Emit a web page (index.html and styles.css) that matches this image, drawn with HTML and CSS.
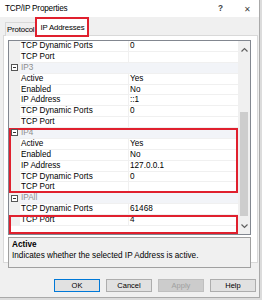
FILE: index.html
```html
<!DOCTYPE html>
<html lang="en">
<head>
    <meta charset="UTF-8">
    <title>TCP/IP Properties</title>
    <link rel="stylesheet" href="styles.css">
</head>
<body>
    <div class="window">
        <div class="titlebar">
            <span class="title">TCP/IP Properties</span>
            <span class="help">?</span>
            <span class="close">✕</span>
        </div>

        <div class="tabs">
            <div class="tab">Protocol</div>
            <div class="tab active marked">IP Addresses</div>
        </div>

        <div class="panel">
            <div class="grid">
                <div class="rows">
                    <div class="row"><span class="gutter"></span><span class="name">TCP Dynamic Ports</span><span class="value">0</span></div>
                    <div class="row"><span class="gutter"></span><span class="name">TCP Port</span><span class="value"></span></div>

                    <div class="row category"><span class="gutter"><i class="toggle"></i></span><span class="name">IP3</span></div>
                    <div class="row"><span class="gutter"></span><span class="name">Active</span><span class="value">Yes</span></div>
                    <div class="row"><span class="gutter"></span><span class="name">Enabled</span><span class="value">No</span></div>
                    <div class="row"><span class="gutter"></span><span class="name">IP Address</span><span class="value">::1</span></div>
                    <div class="row"><span class="gutter"></span><span class="name">TCP Dynamic Ports</span><span class="value">0</span></div>
                    <div class="row"><span class="gutter"></span><span class="name">TCP Port</span><span class="value"></span></div>

                    <div class="marked">
                        <div class="row category"><span class="gutter"><i class="toggle"></i></span><span class="name">IP4</span></div>
                        <div class="row"><span class="gutter"></span><span class="name">Active</span><span class="value">Yes</span></div>
                        <div class="row"><span class="gutter"></span><span class="name">Enabled</span><span class="value">No</span></div>
                        <div class="row"><span class="gutter"></span><span class="name">IP Address</span><span class="value">127.0.0.1</span></div>
                        <div class="row"><span class="gutter"></span><span class="name">TCP Dynamic Ports</span><span class="value">0</span></div>
                        <div class="row"><span class="gutter"></span><span class="name">TCP Port</span><span class="value"></span></div>
                    </div>

                    <div class="row category"><span class="gutter"><i class="toggle"></i></span><span class="name">IPAll</span></div>
                    <div class="row"><span class="gutter"></span><span class="name">TCP Dynamic Ports</span><span class="value">61468</span></div>
                    <div class="marked last">
                        <div class="row"><span class="gutter"></span><span class="name">TCP Port</span><span class="value">4</span></div>
                    </div>
                </div>

                <div class="scrollbar">
                    <div class="arrow">
                        <svg width="7" height="5" viewBox="0 0 7 5"><path d="M0.5 4.5 L3.5 1.5 L6.5 4.5" fill="none" stroke="#606060" stroke-width="1.2"/></svg>
                    </div>
                    <div class="track">
                        <div class="thumb"></div>
                    </div>
                    <div class="arrow">
                        <svg width="7" height="5" viewBox="0 0 7 5"><path d="M0.5 0.5 L3.5 3.5 L6.5 0.5" fill="none" stroke="#606060" stroke-width="1.2"/></svg>
                    </div>
                </div>
            </div>

            <div class="desc">
                <p class="desc-title">Active</p>
                <p>Indicates whether the selected IP Address is active.</p>
            </div>
        </div>

        <div class="buttons">
            <button class="default">OK</button>
            <button>Cancel</button>
            <button disabled>Apply</button>
            <button>Help</button>
        </div>
    </div>
</body>
</html>
```

FILE: styles.css
```css
html {
    background: #dcdcdc;
}
body {
    margin: 0;
    font-family: "Liberation Sans", Arial, sans-serif;
    font-size: 8.2px;
    color: #000;
}
.window {
    width: 260px;
    height: 298px;
    background: #f0f0f0;
    border-right: 1px solid #a9a9a9;
    border-bottom: 1px solid #a9a9a9;
    box-sizing: border-box;
}
.titlebar {
    height: 17px;
    background: #fff;
    display: flex;
    align-items: center;
    padding-left: 5px;
}
.title {
    flex: 1;
    letter-spacing: -0.2px;
}
.help {
    width: 8px;
    margin-right: 18px;
    font-weight: bold;
    color: #444;
}
.close {
    width: 10px;
    margin-right: 5px;
    color: #444;
}

.tabs {
    display: flex;
    padding: 1px 0 0 5px;
    height: 18px;
    box-sizing: border-box;
}
.tab {
    padding: 0 1px;
    line-height: 13px;
    margin-top: 4px;
    height: 13px;
    border: 1px solid #d9d9d9;
    border-bottom: none;
    background: #f0f0f0;
    white-space: nowrap;
    font-size: 7.8px;
    letter-spacing: -0.15px;
}
.tab.active {
    margin-top: 0;
    height: 18px;
    line-height: 17px;
    padding: 0 3px;
    box-sizing: border-box;
    background: #fff;
    position: relative;
    z-index: 1;
}
.marked {
    outline: 2px solid #e0202e;
    outline-offset: -2px;
    position: relative;
    z-index: 2;
}
.tab.marked {
    outline-offset: -1px;
}

.panel {
    margin: 0 1px 0 3px;
    height: 228px;
    border: 1px solid #d9d9d9;
    background: #fff;
    padding: 4px 6px 0 4px;
    box-sizing: border-box;
}
.grid {
    display: flex;
    height: 193px;
    border: 1px solid #828790;
    overflow: hidden;
    background: #fff;
}
.rows {
    flex: 1;
    display: flex;
    flex-direction: column;
}
.row {
    display: flex;
    flex: none;
    height: 10.875px;
    line-height: 10.875px;
    box-sizing: border-box;
    border-bottom: 1px solid #f0f0f0;
    white-space: nowrap;
    overflow: hidden;
}
.marked.last {
    flex: 1;
    padding-bottom: 2px;
}
.gutter {
    width: 11px;
    flex: none;
    background: #f0f0f0;
    display: flex;
    align-items: center;
    justify-content: center;
}
.name {
    width: 109px;
    flex: none;
    box-sizing: border-box;
    padding-left: 1px;
    border-right: 1px solid #f0f0f0;
}
.value {
    padding-left: 1px;
}
.category {
    background: #f0f0f0;
}
.category .name {
    color: #8d8d8d;
    border-right: none;
    background: #f2f4f8;
    flex: 1;
}
.toggle {
    width: 5px;
    height: 5px;
    border: 1px solid #555;
    background: #fff;
    position: relative;
}
.toggle::after {
    content: "";
    position: absolute;
    left: 1px;
    top: 2px;
    width: 3px;
    height: 1px;
    background: #333;
}

.scrollbar {
    width: 12px;
    flex: none;
    background: #f0f0f0;
    display: flex;
    flex-direction: column;
}
.arrow {
    height: 16px;
    display: flex;
    align-items: center;
    justify-content: center;
}
.track {
    flex: 1;
    padding-top: 55px;
}
.thumb {
    margin: 0 2px;
    height: 104px;
    background: #cdcdcd;
}

.desc {
    margin-top: 2px;
    height: 31px;
    border: 1px solid #a0a0a0;
    background: #f0f0f0;
    padding: 1px 3px;
    box-sizing: border-box;
}
.desc p {
    margin: 0;
    line-height: 11px;
}
.desc-title {
    font-weight: bold;
}

.buttons {
    display: flex;
    justify-content: flex-end;
    gap: 6px;
    padding: 16px 3px 0 0;
}
button {
    width: 46px;
    height: 13px;
    box-sizing: border-box;
    flex: none;
    padding: 0;
    font-family: "Liberation Sans", Arial, sans-serif;
    font-size: 7.5px;
    background: #e1e1e1;
    border: 1px solid #adadad;
    color: #000;
}
button.default {
    border-color: #0078d7;
}
button:disabled {
    background: #cccccc;
    border-color: #bfbfbf;
    color: #a0a0a0;
}
```
